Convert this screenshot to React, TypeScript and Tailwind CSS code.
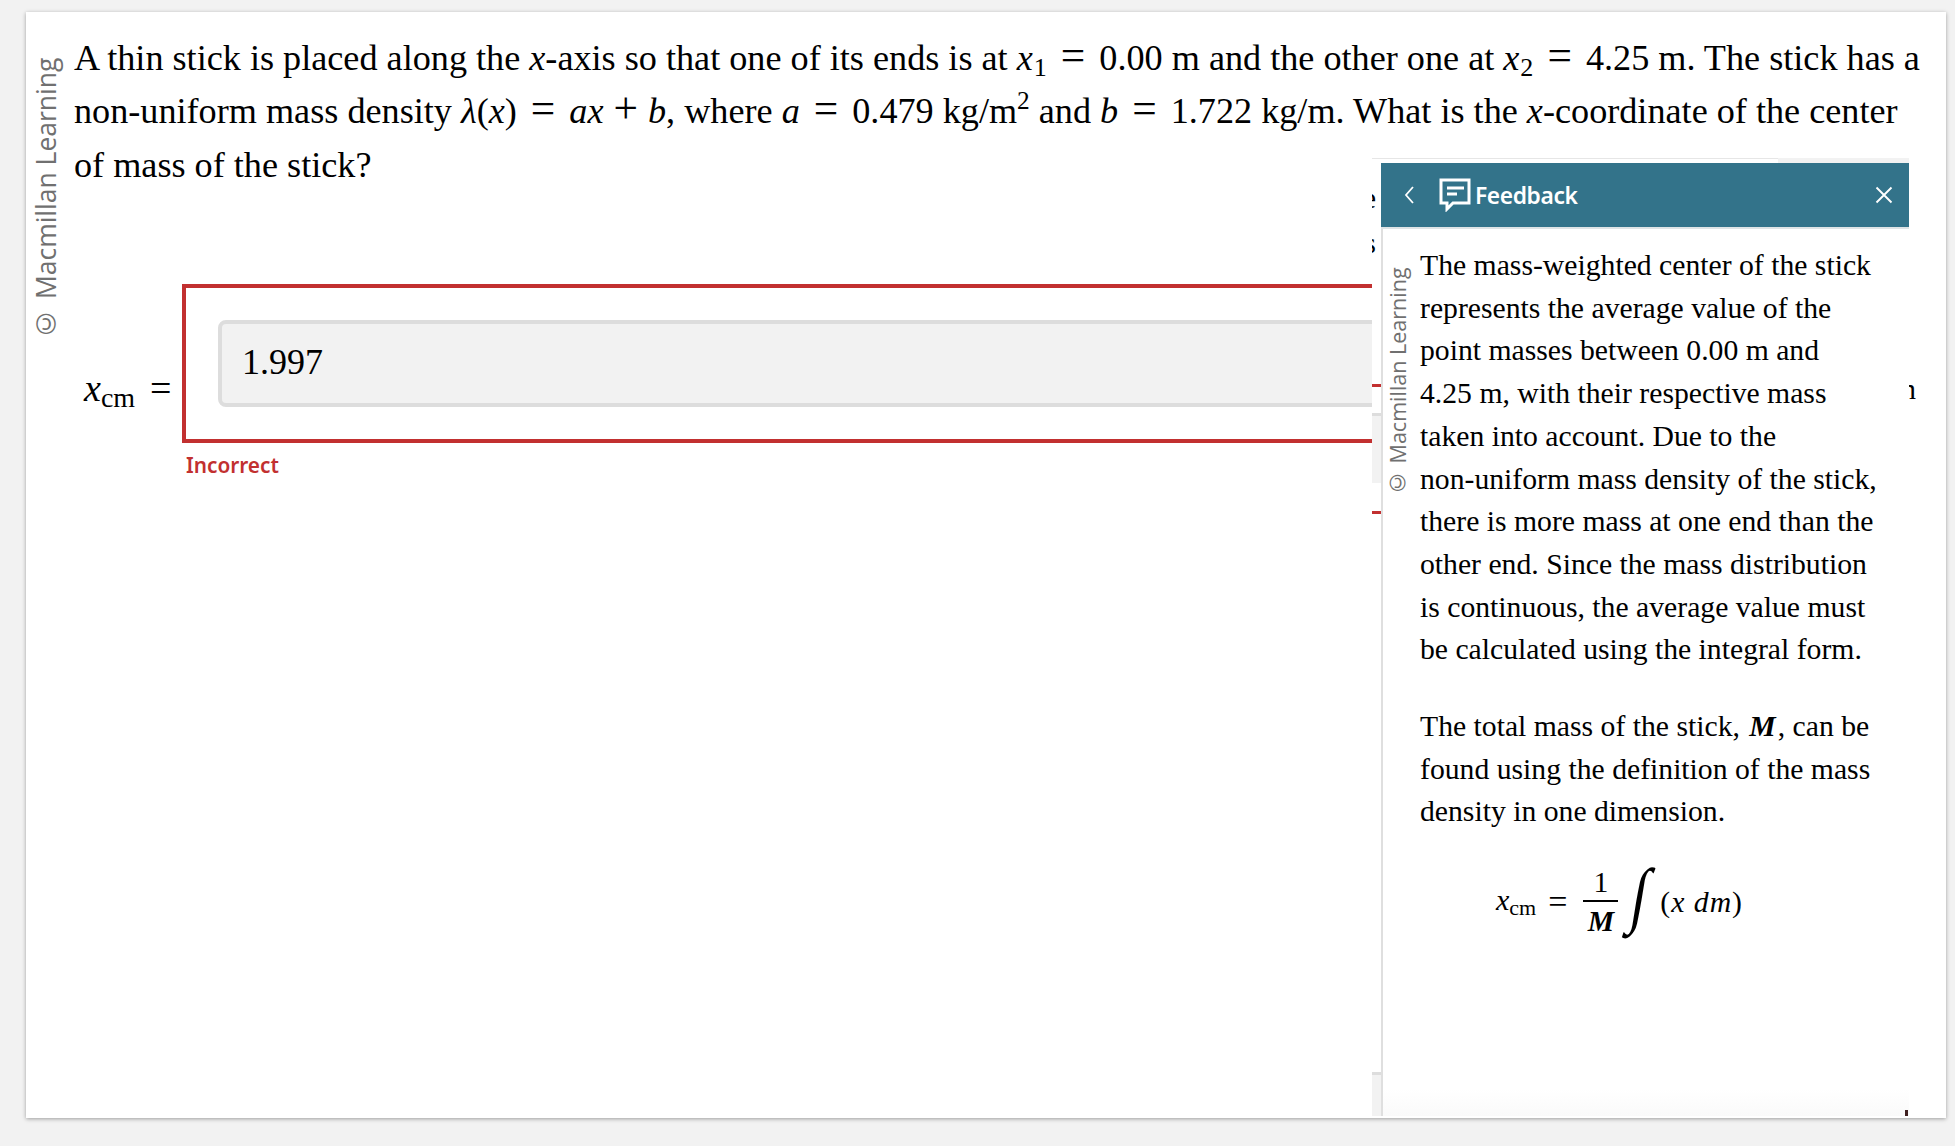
const serif = "font-['Liberation_Serif',serif]";

const feedbackLines = [
  "The mass-weighted center of the stick",
  "represents the average value of the",
  "point masses between 0.00 m and",
  "4.25 m, with their respective mass",
  "taken into account. Due to the",
  "non-uniform mass density of the stick,",
  "there is more mass at one end than the",
  "other end. Since the mass distribution",
  "is continuous, the average value must",
  "be calculated using the integral form.",
];

function Sub({ children }: { children: string }) {
  return <sub className="text-[0.72em] leading-none not-italic align-baseline bottom-[-0.22em] ml-[1px]">{children}</sub>;
}

function Eq() {
  return <span className="text-[1.2em] leading-none mx-[14px]">=</span>;
}

function FeedbackIcon() {
  return (
    <svg width="32" height="34" viewBox="0 0 32 34" fill="none" className="shrink-0">
      <path d="M2 2h28v23H14l-6 6v-6H2z" stroke="white" strokeWidth="3" strokeLinejoin="miter" />
      <path d="M8 10h17M8 16h10" stroke="white" strokeWidth="3" />
    </svg>
  );
}

// pieces of the page sticking out beside the panel, cut off at the edge
function Clipped({ text, className }: { text: string; className: string }) {
  return (
    <div className={`flex justify-end overflow-hidden h-[34px] text-[30px] leading-[34px] text-black ${className}`}>
      <span className="shrink-0">{text}</span>
    </div>
  );
}

export default function App() {
  return (
    <div className={`min-h-screen w-full bg-[#f2f2f2] pt-3 pl-[26px] pr-[9px] ${serif}`}>
      <div className="relative h-[1106px] bg-white text-black shadow-[0_1px_4px_rgba(0,0,0,0.35)] overflow-hidden">
        {/* watermark */}
        <div className="absolute left-[3px] top-[49px] h-[277px] flex items-center justify-center [writing-mode:vertical-rl] rotate-180 font-['Open_Sans',sans-serif] text-[26.5px] leading-[34px] text-[#707070] whitespace-nowrap">
          © Macmillan Learning
        </div>

        {/* question */}
        <p className="pl-[48px] pt-[20px] text-[36.2px] leading-[53.3px] whitespace-nowrap">
          A thin stick is placed along the <i>x</i>-axis so that one of its ends is at <i>x</i><Sub>1</Sub><Eq />0.00 m and the other one at <i>x</i><Sub>2</Sub><Eq />4.25 m. The stick has a
          <br />
          non-uniform mass density <i>λ</i>(<i>x</i>)<Eq /><i>ax</i><span className="text-[1.2em] leading-none mx-[10px]">+</span><i>b</i>, where <i>a</i><Eq />0.479 kg/m<sup className="text-[0.7em] leading-none align-baseline top-[-0.55em]">2</sup> and <i>b</i><Eq />1.722 kg/m. What is the <i>x</i>-coordinate of the center
          <br />
          of mass of the stick?
        </p>

        {/* answer */}
        <div className="flex mt-[92px] pl-[58px] pr-[60px]">
          <div className="w-[98px] shrink-0 pt-[84px] text-[38px] leading-[40px] whitespace-nowrap">
            <i>x</i><span className="text-[28px] leading-none relative top-[6px]">cm</span><span className="text-[38px] leading-none ml-[15px]">=</span>
          </div>
          <div className="flex-1">
            <div className="border-[4px] border-[#c23030] h-[159px] pt-[32px] pl-[32px]">
              <div className="h-[87px] rounded-[8px] border-[4px] border-[#dddddd] bg-[#f2f2f2] flex items-center pl-[20px] pb-[2px] text-[36px]">
                1.997
              </div>
            </div>
            <div className="pl-[4px] mt-[6px] font-['Noto_Sans',sans-serif] font-semibold text-[20.8px] leading-[32px] text-[#c23030]">
              Incorrect
            </div>
          </div>
        </div>

        {/* feedback overlay */}
        <div className="absolute left-[1346px] top-[146px] bottom-[2px] w-[544px] flex">
          <div className="w-[9px] shrink-0 bg-white border-t border-[#e6e6e6] flex flex-col">
            <Clipped text="e" className="w-[4px] mt-[22px]" />
            <Clipped text="s" className="w-[4px] mt-[11px]" />
            <div className="mt-[124px] h-[3px] bg-[#c23030]" />
            <div className="mt-[26px] h-[70px] bg-[#f2f2f2] border-t-[3px] border-[#dddddd]" />
            <div className="mt-[28px] h-[3px] bg-[#c23030]" />
            <div className="mt-auto h-[44px] bg-[#f2f2f2] border-t-[3px] border-[#dddddd]" />
          </div>

          <div className="w-[528px] shrink-0 flex flex-col bg-white">
            <div className="flex h-[5px] shrink-0">
              <div className="w-[397px] border-t border-[#e6e6e6]" />
              <div className="flex-1 bg-[#f2f2f2]" />
            </div>
            <div className="flex items-center h-[66px] shrink-0 bg-[#33738a] border-b-2 border-[#dfe4e6] text-white">
              <svg width="12" height="20" viewBox="0 0 12 20" fill="none" className="ml-[22px] shrink-0">
                <path d="M10 2L3 10l7 8" stroke="white" strokeWidth="1.8" />
              </svg>
              <div className="ml-[24px]">
                <FeedbackIcon />
              </div>
              <span className="ml-[4px] pt-[2px] font-['Noto_Sans',sans-serif] font-semibold text-[22.8px] tracking-[-0.4px]">Feedback</span>
              <svg width="18" height="18" viewBox="0 0 18 18" fill="none" className="ml-auto mr-[16px] shrink-0">
                <path d="M1.5 1.5l15 15M16.5 1.5l-15 15" stroke="white" strokeWidth="1.9" />
              </svg>
            </div>

            <div className="relative flex-1 border-l-2 border-[#dfdfdf] pl-[37px] pt-[15px] text-[29.7px] leading-[42.7px] whitespace-nowrap bg-gradient-to-b from-white from-[97%] to-[#fafafa]">
              <div className="absolute left-[1px] top-[39px] h-[230px] flex items-center justify-center [writing-mode:vertical-rl] rotate-180 font-['Open_Sans',sans-serif] text-[21.5px] leading-[28px] text-[#707070]">
                © Macmillan Learning
              </div>
              <div className="absolute right-[1px] bottom-0 w-[3px] h-[6px] bg-[#402020]" />
              {feedbackLines.map((line) => (
                <div key={line}>{line}</div>
              ))}
              <div className="mt-[34px]">
                <div>The total mass of the stick, <i className="font-bold mx-[2px]">M</i>, can be</div>
                <div>found using the definition of the mass</div>
                <div>density in one dimension.</div>
              </div>

              <div className="flex items-center mt-[33px] ml-[76px] h-[72px]">
                <span className="text-[30px]"><i>x</i><span className="text-[22px] relative top-[5px]">cm</span></span>
                <span className="ml-[12px] text-[34px] leading-none">=</span>
                <div className="ml-[16px] mt-[5px] flex flex-col items-center w-[35px]">
                  <span className="leading-[26px] mb-[5px]">1</span>
                  <div className="h-[2px] w-full bg-black" />
                  <i className="font-bold leading-[38px]">M</i>
                </div>
                <i className="ml-[14px] -translate-y-[7px] text-[58px] leading-[72px] -skew-x-12 scale-y-125">∫</i>
                <span className="ml-[12px] tracking-[1px]">(<i>x</i> <i>dm</i>)</span>
              </div>
            </div>
          </div>

          <div className="flex-1 flex flex-col">
            <Clipped text="n" className="w-[7px] mt-[214px]" />
          </div>
        </div>
      </div>
    </div>
  );
}
